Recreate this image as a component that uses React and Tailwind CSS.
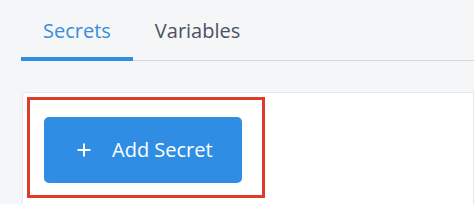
import React from "react";

function PlusIcon() {
  return (
    <svg width="14" height="14" viewBox="0 0 14 14" fill="none" stroke="currentColor" strokeWidth="2">
      <path d="M7 0.5v13M0.5 7h13" />
    </svg>
  );
}

export default function App() {
  return (
    <div
      className="w-[474px] h-[204px] overflow-hidden bg-[#f5f6f8]"
      style={{ fontFamily: '"Open Sans", "Liberation Sans", sans-serif' }}
    >
      {/* tab bar */}
      <div className="ml-[21px] flex border-b border-[#d3d7dc]">
        <button className="-mb-px px-[22px] pt-[17px] pb-[12px] border-b-4 border-[#2f8de4] text-[20px] leading-[28px] text-[#3a8ddb]">
          Secrets
        </button>
        <button className="-mb-px px-[22px] pt-[17px] pb-[12px] border-b-4 border-transparent text-[20px] leading-[28px] text-[#4b5261]">
          Variables
        </button>
      </div>

      {/* card */}
      <div className="mt-[31px] ml-[22px] h-[200px] bg-white border border-[#e6e8eb] rounded-tl-[3px] pl-[4px] pt-[4px]">
        <div className="inline-block border-[3px] border-[#e03a2a] pl-[14px] pt-[17px] pr-[20px] pb-[12px]">
          <button className="flex items-center w-[198px] h-[66px] pl-[33px] rounded-[5px] bg-[#2f8de4] text-white text-[20px] leading-[28px]">
            <PlusIcon />
            <span className="ml-[21px]">Add Secret</span>
          </button>
        </div>
      </div>
    </div>
  );
}
